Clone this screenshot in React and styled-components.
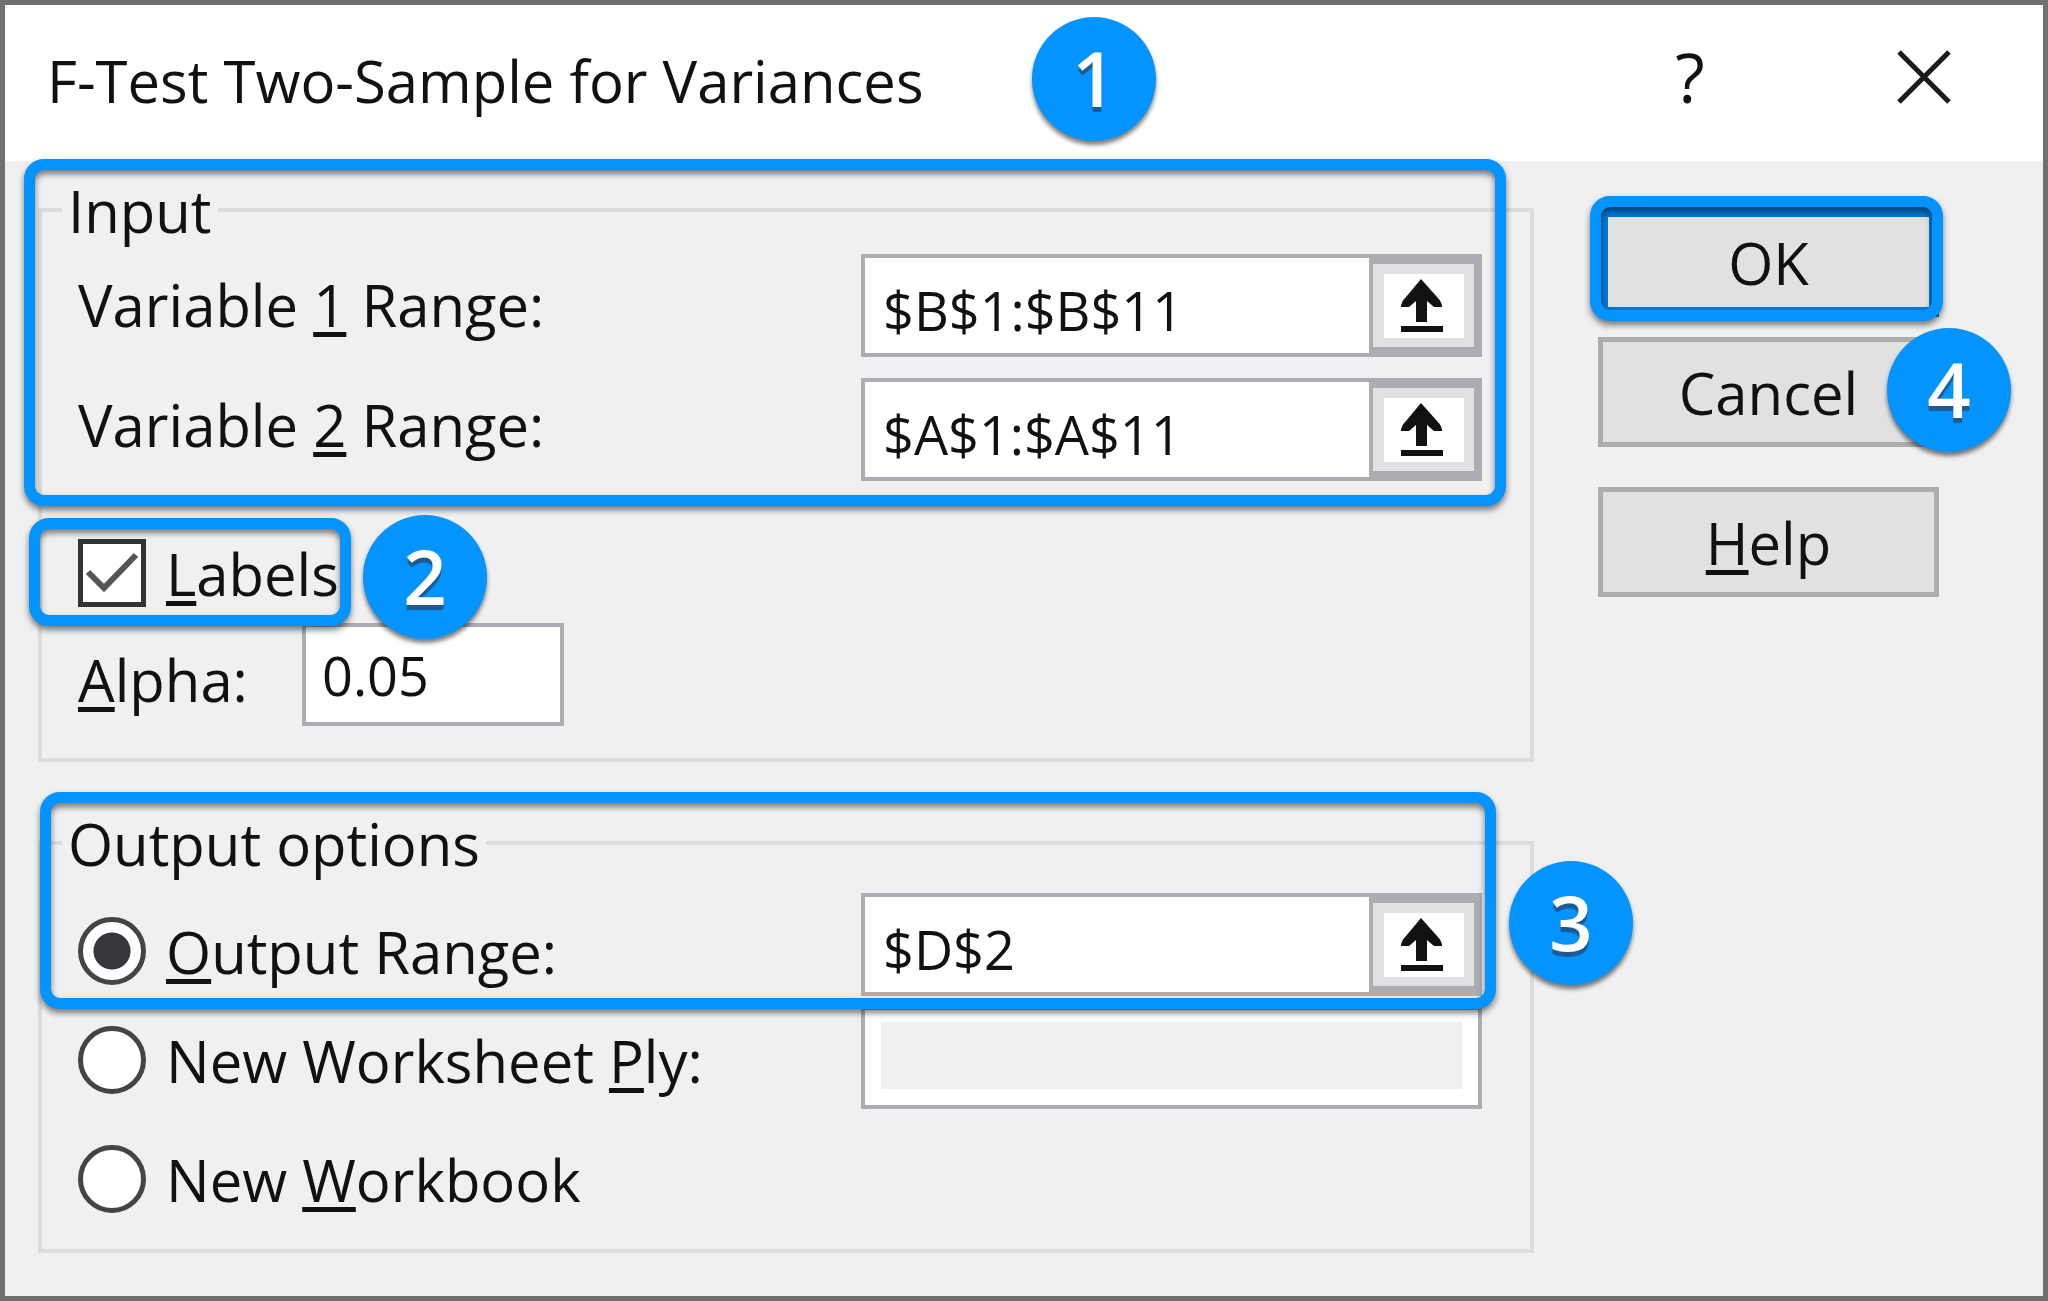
import React from 'react';
import styled, { createGlobalStyle } from 'styled-components';

const App = () => {
    return (
        <Dialog>
            <GlobalStyle />
            <TitleBar>
                <Title>F-Test Two-Sample for Variances</Title>
                <TitleButtons>
                    <TitleButton aria-label="Help">?</TitleButton>
                    <TitleButton aria-label="Close">
                        <svg width="54" height="54" viewBox="0 0 54 54">
                            <path d="M2 2L52 52M52 2L2 52" stroke="#1a1a1a" strokeWidth="5" />
                        </svg>
                    </TitleButton>
                </TitleButtons>
                <Badge $top="12px" $left="1027px">1</Badge>
            </TitleBar>
            <Content>
                <Groups>
                    <Group>
                        <Fieldset>
                            <Legend>Input</Legend>
                            <Fields>
                                <RangeLabels>
                                    <label htmlFor="variable1">Variable <Key>1</Key> Range:</label>
                                    <label htmlFor="variable2">Variable <Key>2</Key> Range:</label>
                                </RangeLabels>
                                <Inputs>
                                    <RangeField id="variable1" value="$B$1:$B$11" />
                                    <RangeField id="variable2" value="$A$1:$A$11" />
                                </Inputs>
                            </Fields>
                            <CheckRow>
                                <Option>
                                    <CheckBox type="checkbox" defaultChecked />
                                    <CheckMark viewBox="0 0 68 68">
                                        <path d="M10 33L26 49L58 16" fill="none" stroke="#555" strokeWidth="6" />
                                    </CheckMark>
                                    <span><Key>L</Key>abels</span>
                                </Option>
                            </CheckRow>
                            <AlphaRow>
                                <AlphaLabel htmlFor="alpha"><Key>A</Key>lpha:</AlphaLabel>
                                <AlphaInput id="alpha" defaultValue="0.05" />
                            </AlphaRow>
                        </Fieldset>
                        <Highlight $top="-19px" $left="-14px" $right="28px" $height="347px" />
                        <Highlight $top="340px" $left="-9px" $width="322px" $height="108px" />
                        <Badge $top="337px" $left="325px">2</Badge>
                    </Group>
                    <Group>
                        <Fieldset>
                            <Legend>Output options</Legend>
                            <Fields>
                                <OutputLabels>
                                    <Option>
                                        <Radio type="radio" name="output" defaultChecked />
                                        <span><Key>O</Key>utput Range:</span>
                                    </Option>
                                    <Option>
                                        <Radio type="radio" name="output" />
                                        <span>New Worksheet <Key>P</Key>ly:</span>
                                    </Option>
                                    <Option>
                                        <Radio type="radio" name="output" />
                                        <span>New <Key>W</Key>orkbook</span>
                                    </Option>
                                </OutputLabels>
                                <OutputInputs>
                                    <RangeField label="Output Range" value="$D$2" />
                                    <PlyInput aria-label="New Worksheet Ply" disabled />
                                </OutputInputs>
                            </Fields>
                        </Fieldset>
                        <Highlight $top="-19px" $left="2px" $right="38px" $height="217px" />
                        <Badge $top="50px" $left="calc(100% - 25px)">3</Badge>
                    </Group>
                </Groups>
                <Actions>
                    <ActionItem>
                        <Action $primary>OK</Action>
                        <Highlight $top="-11px" $left="-8px" $right="-4px" $height="125px" />
                    </ActionItem>
                    <ActionItem>
                        <Action>Cancel</Action>
                        <Badge $top="-9px" $left="289px">4</Badge>
                    </ActionItem>
                    <ActionItem $spaced>
                        <Action><Key>H</Key>elp</Action>
                    </ActionItem>
                </Actions>
            </Content>
        </Dialog>
    );
}

const RangeField = ({ id, label, value }) => {
    return (
        <RangeBox>
            <RangeInput id={id} aria-label={label} defaultValue={value} />
            <PickButton aria-label="Select range">
                <PickIcon viewBox="0 0 80 64">
                    <path d="M37 5L53 23Q58 28 58 33H50L43 27V48H32V27L25 33H17Q17 28 22 23Z" fill="#111" />
                    <path d="M17 52H59V58H17Z" fill="#111" />
                </PickIcon>
            </PickButton>
        </RangeBox>
    );
}

export default App;

const GlobalStyle = createGlobalStyle
`
    * {
        box-sizing : border-box;
    }
    body {
        margin : 0;
        background-color : #f0f0f0;
    }
    body, input, button {
        font-family : "Open Sans", "Noto Sans", sans-serif;
        font-size : 58px;
        line-height : 70px;
        color : #111;
    }
`

const Dialog = styled.div
`
    min-height : 100vh;
    border : 5px solid #707070;
    background-color : #f0f0f0;
`

const TitleBar = styled.header
`
    position : relative;
    display : flex;
    align-items : center;
    justify-content : space-between;
    height : 156px;
    padding : 0 67px 4px 42px;
    background-color : #fff;
`

const Title = styled.h1
`
    margin : 0;
    font-size : 58px;
    font-weight : 400;
    white-space : nowrap;
`

const TitleButtons = styled.div
`
    display : flex;
    gap : 130px;
    padding-bottom : 8px;
`

const TitleButton = styled.button
`
    display : flex;
    align-items : center;
    justify-content : center;
    width : 104px;
    height : 104px;
    padding : 0;
    border : none;
    background : none;
    font-size : 68px;
`

const Content = styled.main
`
    display : flex;
    gap : 64px;
    padding : 17px 104px 40px 33px;
`

const Groups = styled.div
`
    flex : 1;
    display : flex;
    flex-direction : column;
    gap : 49px;
`

const Group = styled.section
`
    position : relative;
`

const Fieldset = styled.fieldset
`
    min-width : 0;
    margin : 0;
    padding : 0 48px 32px 36px;
    border : 4px solid #dcdcdc;
`

const Legend = styled.legend
`
    height : 64px;
    margin-left : -16px;
    padding : 0 6px;
    line-height : 66px;
`

const Fields = styled.div
`
    display : flex;
    justify-content : space-between;
    white-space : nowrap;
`

const RangeLabels = styled.div
`
    display : flex;
    flex-direction : column;
    gap : 50px;
    padding-top : 28px;
`

const OutputLabels = styled.div
`
    display : grid;
    grid-template-rows : 109px 119px 72px;
    align-items : start;
    padding-top : 42px;
`

const Inputs = styled.div
`
    display : flex;
    flex-direction : column;
    gap : 21px;
    width : 621px;
    padding-top : 12px;
`

const OutputInputs = styled(Inputs)
`
    gap : 10px;
    padding-top : 18px;
`

const AlphaLabel = styled.label
`
    width : 224px;
    line-height : 92px;
`

// Underlined access key of a label
const Key = styled.u
`
    text-decoration-thickness : 5px;
    text-underline-offset : 5px;
    text-decoration-skip-ink : none;
`

const RangeBox = styled.div
`
    display : flex;
    height : 103px;
    border : 4px solid #abadb3;
    background-color : #fff;
`

const RangeInput = styled.input
`
    flex : 1;
    min-width : 0;
    padding : 8px 0 0 18px;
    border : none;
    background : none;
    font-size : 54px;
    outline : none;
`

const PickButton = styled.button
`
    display : flex;
    align-items : center;
    justify-content : center;
    width : 109px;
    padding : 0;
    border : 4px solid #abadb3;
    border-width : 6px 4px;
    background-color : #e1e1e1;
`

const PickIcon = styled.svg
`
    width : 80px;
    height : 64px;
    background-color : #fff;
`

const CheckRow = styled.div
`
    display : flex;
    margin-top : 58px;
`

const Option = styled.label
`
    display : grid;
    grid-template-columns : 68px auto;
    justify-content : start;
    column-gap : 20px;
    height : 68px;
`

const CheckBox = styled.input
`
    grid-area : 1 / 1;
    appearance : none;
    width : 68px;
    height : 68px;
    margin : 0;
    border : 5px solid #333;
    background-color : #fff;
`

const CheckMark = styled.svg
`
    grid-area : 1 / 1;
    width : 68px;
    height : 68px;
    pointer-events : none;
`

const Radio = styled.input
`
    appearance : none;
    width : 68px;
    height : 68px;
    margin : 0;
    border : 5px solid #444;
    border-radius : 50%;
    background-color : #fff;

    &:checked {
        background-image : radial-gradient(circle, #38363a 18px, transparent 19px);
    }
`

const AlphaRow = styled.div
`
    display : flex;
    align-items : flex-end;
    margin-top : 16px;
`

const AlphaInput = styled.input
`
    width : 262px;
    height : 103px;
    padding : 0 16px;
    border : 4px solid #abadb3;
    background-color : #fff;
    font-size : 54px;
    outline : none;
`

const PlyInput = styled.input
`
    width : 100%;
    height : 103px;
    padding : 12px 16px 16px;
    border : 4px solid #abadb3;
    background : linear-gradient(#f0f0f0, #f0f0f0) content-box, #fff;
`

const Actions = styled.div
`
    display : flex;
    flex-direction : column;
    gap : 20px;
    width : 341px;
    padding-top : 29px;
`

const ActionItem = styled.div
`
    position : relative;
    margin-top : ${props => props.$spaced ? '20px' : '0'};
`

const Action = styled.button
`
    display : block;
    width : 100%;
    height : 110px;
    padding : 2px 0 0;
    border : ${props => props.$primary ? '10px solid #0078d7' : '5px solid #adadad'};
    background-color : #e1e1e1;
`

// Callout frame and number drawn over the dialog
const Highlight = styled.div
`
    position : absolute;
    top : ${props => props.$top};
    left : ${props => props.$left};
    right : ${props => props.$right};
    width : ${props => props.$width};
    height : ${props => props.$height};
    border : 11px solid #0494ff;
    border-radius : 20px;
    filter : drop-shadow(0 4px 3px rgba(0, 0, 0, 0.5));
    pointer-events : none;
`

const Badge = styled.span
`
    position : absolute;
    top : ${props => props.$top};
    left : ${props => props.$left};
    z-index : 1;
    width : 124px;
    height : 124px;
    border-radius : 50%;
    background-color : #0494ff;
    box-shadow : 0 4px 4px rgba(0, 0, 0, 0.5);
    color : #fff;
    font-size : 76px;
    font-weight : 600;
    line-height : 122px;
    text-align : center;
    text-shadow : 0 5px 1px #1b5a94;
`
